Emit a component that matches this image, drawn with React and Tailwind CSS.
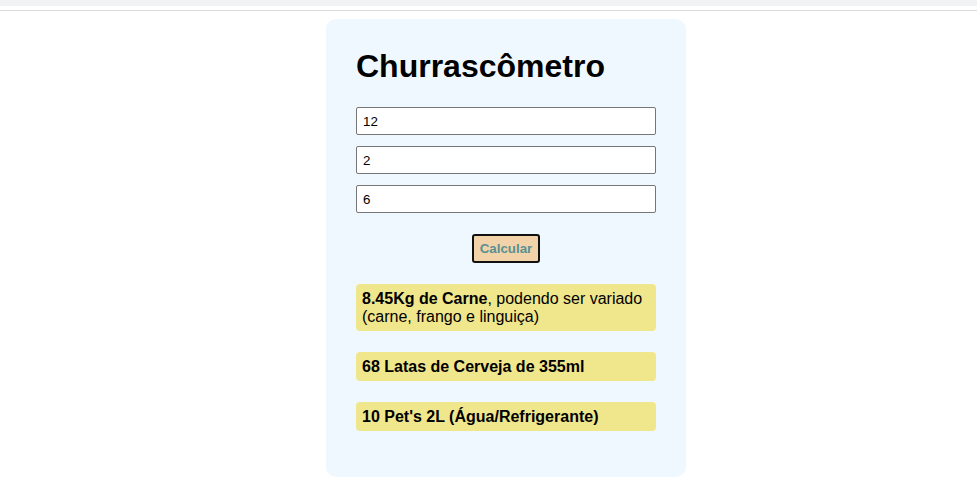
const App = () => {
    return <div className="min-h-screen bg-white font-['Liberation_Sans',Arial,sans-serif] text-black">
        {/* browser strip */}
        <div className="h-[6px] bg-[#f1f2f4]"></div>
        <div className="h-[4px] bg-white"></div>
        <div className="h-px bg-[#dadada]"></div>

        <div className="flex justify-center pt-[8px] pl-[35px]">
            <div className="w-[360px] rounded-[10px] bg-[#f0f8ff] px-[30px] pt-[29px] pb-[46px]">
                <h1 className="m-0 mb-[23px] text-[32px] font-bold leading-[36px]">Churrascômetro</h1>

                <div className="flex flex-col gap-[11px]">
                    <input defaultValue="12" className="h-[28px] w-full rounded-[2px] border border-[#767676] bg-white px-[6px] text-[13.33px] outline-none" />
                    <input defaultValue="2" className="h-[28px] w-full rounded-[2px] border border-[#767676] bg-white px-[6px] text-[13.33px] outline-none" />
                    <input defaultValue="6" className="h-[28px] w-full rounded-[2px] border border-[#767676] bg-white px-[6px] text-[13.33px] outline-none" />
                </div>

                <div className="mt-[21px] flex justify-center">
                    <button className="h-[29px] w-[68px] rounded-[3px] border-2 border-[#111] bg-[#f2d3a9] text-[13.33px] font-bold text-[#5a8f92]">Calcular</button>
                </div>

                <div className="mt-[21px] flex flex-col gap-[21px] text-[16px] leading-[18px]">
                    <div className="rounded-[4px] bg-[#f0e68c] px-[6px] pt-[6px] pb-[5px]">
                        <b>8.45Kg de Carne</b>, podendo ser variado (carne, frango e linguiça)
                    </div>
                    <div className="rounded-[4px] bg-[#f0e68c] px-[6px] pt-[6px] pb-[5px] font-bold">
                        68 Latas de Cerveja de 355ml
                    </div>
                    <div className="rounded-[4px] bg-[#f0e68c] px-[6px] pt-[6px] pb-[5px] font-bold">
                        10 Pet's 2L (Água/Refrigerante)
                    </div>
                </div>
            </div>
        </div>
    </div>
}

export default App
